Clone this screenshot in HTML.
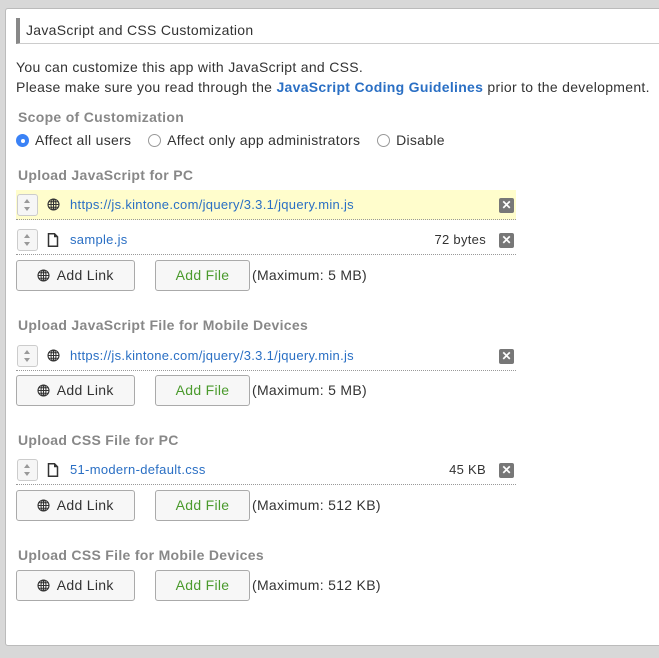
<!DOCTYPE html>
<html><head><meta charset="utf-8"><style>
*{margin:0;padding:0;box-sizing:border-box}
body{width:659px;height:658px;background:#d8d8d8;font-family:"Liberation Sans",sans-serif;font-size:14px;color:#333;position:relative;overflow:hidden;letter-spacing:0.3px}
.panel{position:absolute;left:5px;top:8px;width:670px;height:638px;background:#fff;border:1px solid #bbb;border-radius:3px}
.a{position:absolute;white-space:nowrap}
.title{left:16px;top:18px;width:660px;height:26px;border-left:4px solid #888;border-bottom:1px solid #ccc;padding-left:6px;line-height:25px;font-size:14px}
.h{color:#888;font-weight:bold;font-size:14px}
.link{color:#2a6fc4}
.row{left:16px;width:500px;height:30px;border-bottom:1px dotted #999}
.spin{position:absolute;left:1px;top:4px;width:21px;height:22px;border:1px solid #ccc;border-radius:3px;background:#f6f6f6}
.spin:before{content:"";position:absolute;left:6px;top:4px;border:3px solid transparent;border-bottom:4px solid #999;border-top:0}
.spin:after{content:"";position:absolute;left:6px;top:12px;border:3px solid transparent;border-top:4px solid #999;border-bottom:0}
.row .ic{position:absolute;left:31px;top:8px}
.row .t{position:absolute;left:54px;top:7px;font-size:13px;color:#2a6fc4}
.row .sz{position:absolute;right:30px;top:7px;font-size:13px;color:#333}
.x{position:absolute;right:2px;top:8px;width:15px;height:15px;background:#777;border-radius:2px;color:#fff;font-size:12px;font-weight:bold;line-height:15px;text-align:center;letter-spacing:0}
.btn{position:absolute;height:31px;border:1px solid #aaa;border-radius:3px;background:#f7f7f7;line-height:29px;text-align:center;font-size:14px}
.bl{left:16px;width:119px}
.bf{left:155px;width:95px;color:#4a9a2c}
.mx{left:252px}
.radio{display:inline-block;width:13px;height:13px;border-radius:50%;border:1px solid #999;vertical-align:-2px;margin-right:6px;background:#fff}
.radio.on{background:#3b82f6;border-color:#3b82f6;position:relative}
.radio.on:after{content:"";position:absolute;left:3.5px;top:3.5px;width:4px;height:4px;border-radius:50%;background:#fff}
</style></head><body>
<div class="panel"></div>
<div class="a title">JavaScript and CSS Customization</div>
<div class="a" style="left:16px;top:59px">You can customize this app with JavaScript and CSS.</div>
<div class="a" style="left:16px;top:79px">Please make sure you read through the <b class="link">JavaScript Coding Guidelines</b> prior to the development.</div>
<div class="a h" style="left:18px;top:109px">Scope of Customization</div>
<div class="a" style="left:16px;top:132px"><span class="radio on"></span>Affect all users &nbsp;&nbsp;&nbsp;<span class="radio"></span>Affect only app administrators &nbsp;&nbsp;&nbsp;<span class="radio"></span>Disable</div>

<svg width="0" height="0" style="position:absolute"><defs>
<g id="gl"><circle cx="6.5" cy="6.5" r="5.5" fill="none" stroke="#333" stroke-width="1.1"/><ellipse cx="6.5" cy="6.5" rx="2.5" ry="5.5" fill="none" stroke="#333" stroke-width="1"/><path d="M1 6.5H12M1.8 3.8H11.2M1.8 9.2H11.2M6.5 1V12" stroke="#333" stroke-width="1"/></g>
<g id="fl"><path d="M1.5 0.8H7.5L10.5 3.8V13.2H1.5Z" fill="#fff" stroke="#333" stroke-width="1.5"/><path d="M7 1V4.3H10.5" fill="#333"/></g>
</defs></svg>

<div class="a h" style="left:18px;top:167px">Upload JavaScript for PC</div>
<div class="a row" style="top:190px;background:#fffdcc"><div class="spin"></div><svg class="ic" width="13" height="13"><use href="#gl"/></svg><span class="t">https://js.kintone.com/jquery/3.3.1/jquery.min.js</span><div class="x">✕</div></div>
<div class="a row" style="top:225px"><div class="spin"></div><svg class="ic" width="12" height="14"><use href="#fl"/></svg><span class="t">sample.js</span><span class="sz">72 bytes</span><div class="x">✕</div></div>
<div class="btn bl" style="top:260px"><svg width="13" height="13" style="vertical-align:-2px;margin-right:3px"><use href="#gl"/></svg> Add Link</div>
<div class="btn bf" style="top:260px">Add File</div>
<div class="a mx" style="top:267px">(Maximum: 5 MB)</div>

<div class="a h" style="left:18px;top:317px">Upload JavaScript File for Mobile Devices</div>
<div class="a row" style="top:341px"><div class="spin"></div><svg class="ic" width="13" height="13"><use href="#gl"/></svg><span class="t">https://js.kintone.com/jquery/3.3.1/jquery.min.js</span><div class="x">✕</div></div>
<div class="btn bl" style="top:375px"><svg width="13" height="13" style="vertical-align:-2px;margin-right:3px"><use href="#gl"/></svg> Add Link</div>
<div class="btn bf" style="top:375px">Add File</div>
<div class="a mx" style="top:382px">(Maximum: 5 MB)</div>

<div class="a h" style="left:18px;top:432px">Upload CSS File for PC</div>
<div class="a row" style="top:455px"><div class="spin"></div><svg class="ic" width="12" height="14"><use href="#fl"/></svg><span class="t">51-modern-default.css</span><span class="sz">45 KB</span><div class="x">✕</div></div>
<div class="btn bl" style="top:490px"><svg width="13" height="13" style="vertical-align:-2px;margin-right:3px"><use href="#gl"/></svg> Add Link</div>
<div class="btn bf" style="top:490px">Add File</div>
<div class="a mx" style="top:497px">(Maximum: 512 KB)</div>

<div class="a h" style="left:18px;top:547px">Upload CSS File for Mobile Devices</div>
<div class="btn bl" style="top:570px"><svg width="13" height="13" style="vertical-align:-2px;margin-right:3px"><use href="#gl"/></svg> Add Link</div>
<div class="btn bf" style="top:570px">Add File</div>
<div class="a mx" style="top:577px">(Maximum: 512 KB)</div>
</body></html>
